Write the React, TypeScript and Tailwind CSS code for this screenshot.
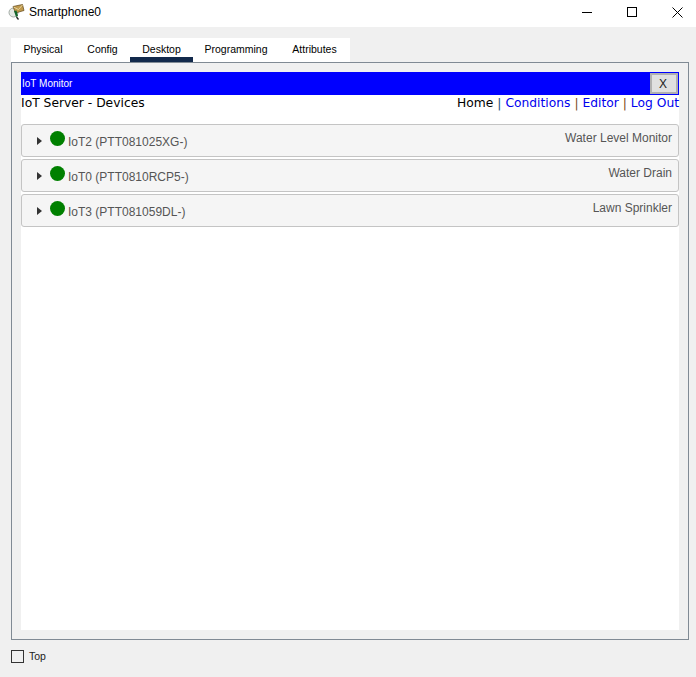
const tabs = [
    { label: "Physical", width: "w-[64px]" },
    { label: "Config", width: "w-[55px]" },
    { label: "Desktop", width: "w-[63px]" },
    { label: "Programming", width: "w-[86px]" },
    { label: "Attributes", width: "w-[71px]" },
]

const devices = [
    { name: "IoT2 (PTT081025XG-)", type: "Water Level Monitor" },
    { name: "IoT0 (PTT0810RCP5-)", type: "Water Drain" },
    { name: "IoT3 (PTT081059DL-)", type: "Lawn Sprinkler" },
]

function AppIcon() {
    return (
        <svg width="17" height="16" viewBox="0 0 17 16" className="shrink-0">
            <circle cx="5.5" cy="8.5" r="4.5" fill="#e4e8e4" stroke="#a4aca6" />
            <path d="M5 2.5L14.5 0.5 16 6.5 7.5 9z" fill="#c09a4e" stroke="#5d4415" strokeWidth="0.7" />
            <path d="M5.5 3l5 2.5 4-4.5" fill="none" stroke="#eedfae" strokeWidth="0.8" />
            <path d="M6 7l2 6 2-1-1.5-5.5z" fill="#14662a" />
            <path d="M8.5 13l2 2.5" stroke="#222" strokeWidth="1.3" />
        </svg>
    )
}

function DeviceRow({ name, type }: { name: string; type: string }) {
    return (
        <div className="flex h-[33px] items-start justify-between rounded-[3px] border border-[#c4c4c4] bg-[#f5f5f5] pl-[15px] pr-[6px] text-[12px] text-[#555]">
            <div className="flex items-start">
                <span className="mt-[12px] h-0 w-0 border-y-[4px] border-l-[5px] border-y-transparent border-l-[#333]" />
                <span className="ml-[8px] mt-[6px] h-[15px] w-[15px] rounded-full bg-[#008000]" />
                <span className="ml-[3px] mt-[9px] leading-[16px]">{name}</span>
            </div>
            <span className="mt-[5px] leading-[16px]">{type}</span>
        </div>
    )
}

export default function App() {
    return (
        <div className="flex h-[677px] w-[696px] flex-col overflow-hidden bg-[#f0f0f0] font-['Liberation_Sans',sans-serif]">
            {/* Title bar */}
            <div className="flex h-[27px] shrink-0 items-center bg-white pb-[3px] pl-[8px]">
                <AppIcon />
                <span className="ml-[4px] text-[12px] text-black">Smartphone0</span>
                <div className="ml-auto mr-[13px] flex items-center gap-[35px]">
                    <span className="h-px w-[10px] bg-black" />
                    <span className="h-[10px] w-[10px] border border-black" />
                    <svg width="11" height="11" viewBox="0 0 11 11">
                        <path d="M0.5 0.5l10 10M10.5 0.5l-10 10" stroke="#000" strokeWidth="1" fill="none" />
                    </svg>
                </div>
            </div>

            {/* Tabs */}
            <div className="ml-[11px] mt-[11px] flex h-[24px] w-[339px] shrink-0 bg-white text-[10.5px] text-black">
                {tabs.map((tab) => (
                    <div
                        key={tab.label}
                        className={`flex items-center justify-center border-b-[5px] pt-[4px] ${tab.width} ${tab.label === "Desktop" ? "border-[#12294b]" : "border-transparent"}`}
                    >
                        {tab.label}
                    </div>
                ))}
            </div>

            {/* Desktop frame */}
            <div className="ml-[11px] h-[578px] w-[678px] shrink-0 border border-[#808a94] p-[9px]">
                <div className="flex h-full flex-col bg-white">
                    <div className="flex h-[23px] shrink-0 items-center justify-between bg-[#0000ff] text-[10px] text-white">
                        <span className="pl-px">IoT Monitor</span>
                        <button className="mr-[1px] flex h-[21px] w-[28px] items-center justify-center border-2 border-[#b0b0b0] bg-[#e0e0e0] pr-[2px] text-[12px] text-[#222]">
                            X
                        </button>
                    </div>
                    <div className="flex h-[16px] shrink-0 items-center justify-between font-['DejaVu_Sans',sans-serif] text-[12.3px] leading-[16px] text-black">
                        <span>IoT Server - Devices</span>
                        <div className="whitespace-pre">
                            <span>Home</span>
                            <span className="text-[#1a4f7a]"> | </span>
                            <span className="text-[#0000ee]">Conditions</span>
                            <span className="text-[#7a4a1a]"> | </span>
                            <span className="text-[#0000ee]">Editor</span>
                            <span className="text-[#7a4a1a]"> | </span>
                            <span className="text-[#0000ee]">Log Out</span>
                        </div>
                    </div>
                    <div className="mt-[13px] flex flex-col gap-[2px]">
                        {devices.map((d) => (
                            <DeviceRow key={d.name} name={d.name} type={d.type} />
                        ))}
                    </div>
                </div>
            </div>

            {/* Footer */}
            <div className="ml-[11px] mt-[9px] flex items-center text-[10.5px] text-[#222]">
                <span className="h-[13px] w-[13px] border border-[#333] bg-[#f0f0f0]" />
                <span className="ml-[5px]">Top</span>
            </div>
        </div>
    )
}
